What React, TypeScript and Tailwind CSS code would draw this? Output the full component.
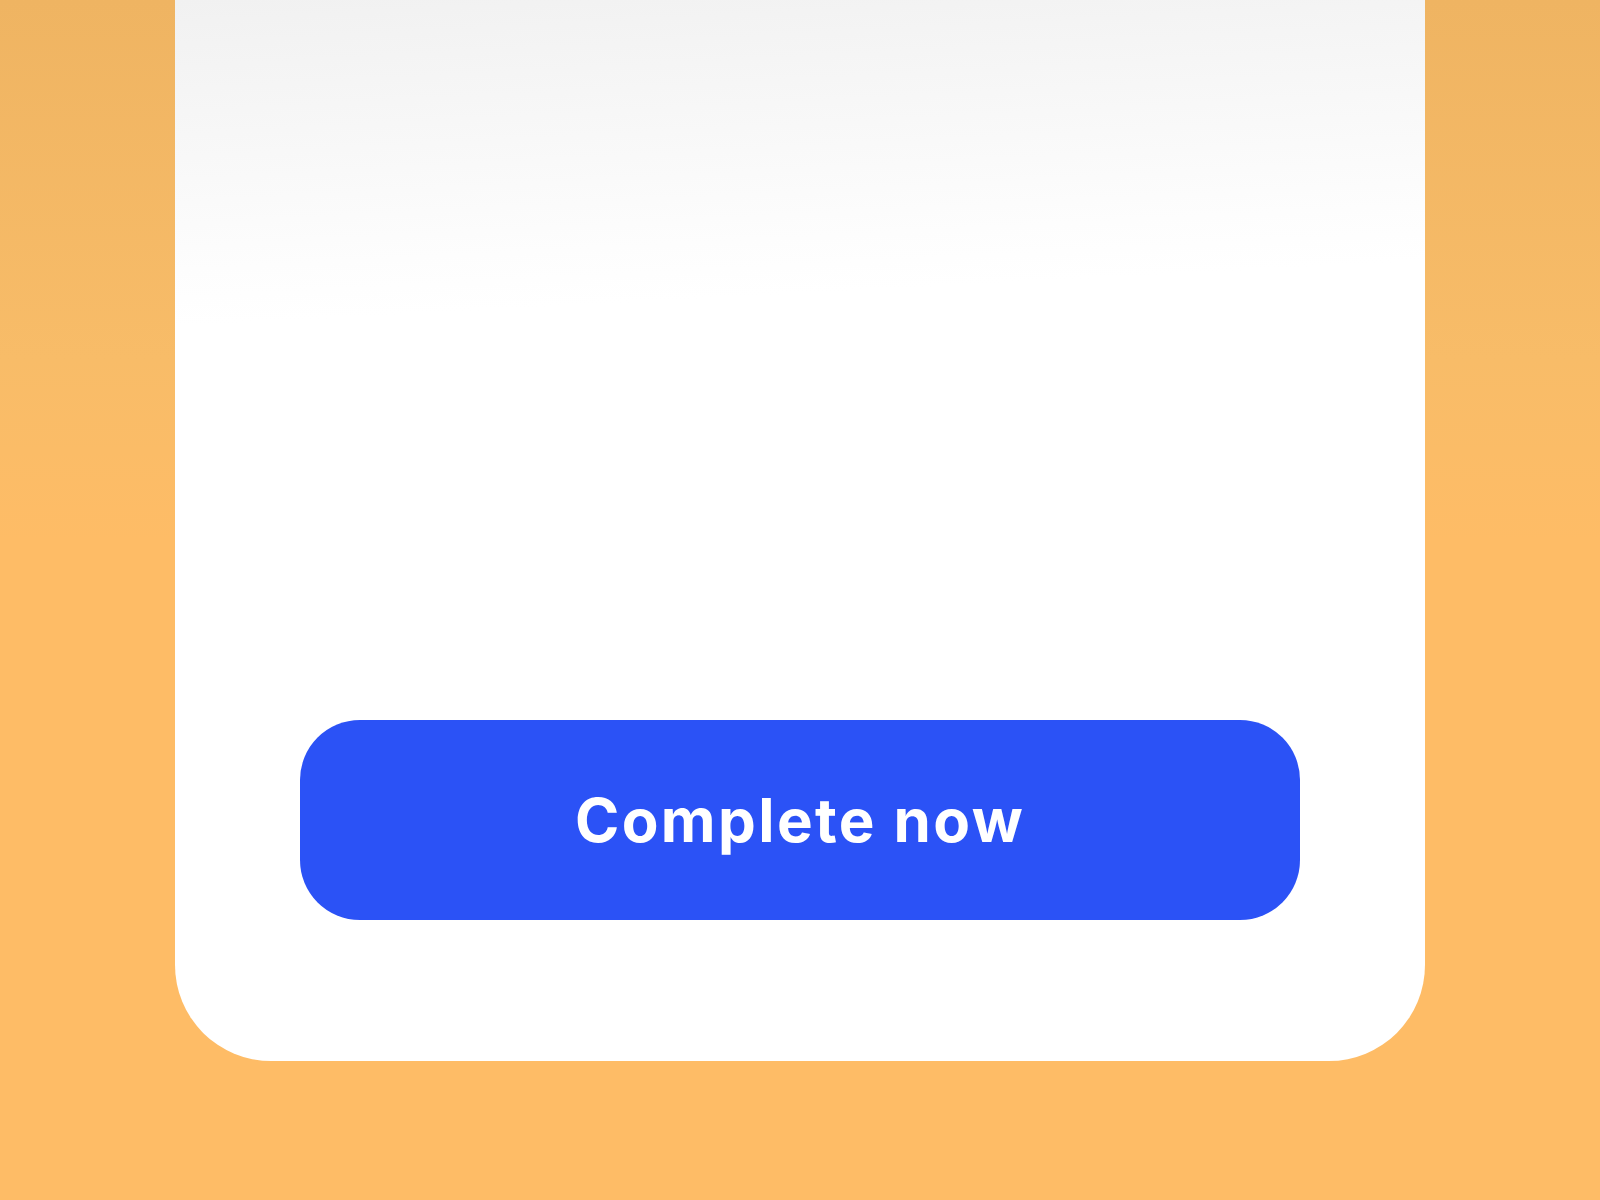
export default function App() {
  return (
    <div className="min-h-[1200px] w-full bg-[linear-gradient(to_bottom,#efb462_0%,#f8bc68_30%,#febc66_45%,#febc66_100%)] flex justify-center" style={{ fontFamily: 'Inter, "Liberation Sans", sans-serif' }}>
      <div className="w-[1250px] h-[1061px] rounded-b-[96px] bg-[linear-gradient(177deg,#f1f1f1_0%,#f6f6f6_10%,#fafafa_18%,#fdfdfd_24%,#ffffff_29%,#ffffff_100%)] flex flex-col justify-end px-[125px] pb-[141px]">
        <button className="h-[200px] w-full rounded-[60px] bg-[#2b52f6] text-white text-[60px] font-bold tracking-[0.04em] flex items-center justify-center">
          Complete now
        </button>
      </div>
    </div>
  );
}
